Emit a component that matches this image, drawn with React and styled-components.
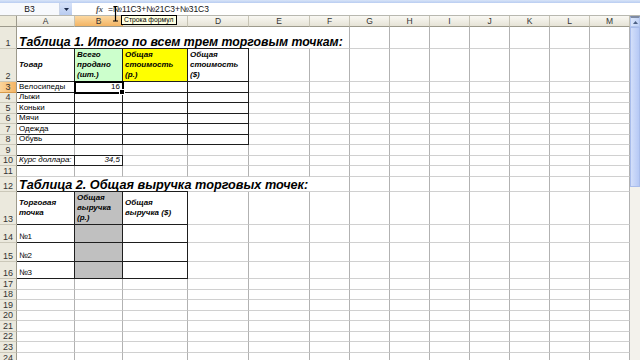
import React from 'react';
import styled, { createGlobalStyle, css } from 'styled-components';

const GlobalStyle = createGlobalStyle`
  html, body {
    margin: 0;
    padding: 0;
    background: #fff;
  }
  body {
    font-family: "Liberation Sans", Arial, sans-serif;
    overflow: hidden;
  }
`;

const COLS = 'ABCDEFGHIJKLM'.split('');
const COL_W = [58, 48, 65, 61, 61, 40, 40, 40, 40, 40, 40, 40, 40];
const ROW_H = [22, 33, 11, 10, 11, 10, 11, 10, 11, 10, 11, 15, 33, 18, 19, 17, 11, 10, 11, 10, 11, 10, 11, 11];

// dark-bordered blocks: [firstCol, lastCol, firstRow, lastRow]
const BOXES = [
  [0, 3, 2, 8],
  [0, 1, 10, 10],
  [0, 2, 13, 16],
];

const CELLS = {
  A1: { text: 'Таблица 1. Итого по всем трем торговым точкам:', span: 6, title: 12.3 },
  A2: { text: 'Товар', bold: true, italic: true, valign: 'center' },
  B2: { text: 'Всего продано (шт.)', bold: true, italic: true, wrap: true, valign: 'center', bg: '#ccffcc' },
  C2: { text: 'Общая стоимость (р.)', bold: true, italic: true, wrap: true, valign: 'center', bg: '#ffff00' },
  D2: { text: 'Общая стоимость ($)', bold: true, italic: true, wrap: true, valign: 'center' },
  A3: { text: 'Велосипеды' },
  B3: { text: '16', align: 'right', selected: true },
  A4: { text: 'Лыжи' },
  A5: { text: 'Коньки' },
  A6: { text: 'Мячи' },
  A7: { text: 'Одежда' },
  A8: { text: 'Обувь' },
  A10: { text: 'Курс доллара:', italic: true },
  B10: { text: '34,5', italic: true, align: 'right' },
  A12: { text: 'Таблица 2. Общая выручка торговых точек:', span: 6, title: 12.7 },
  A13: { text: 'Торговая точка', bold: true, italic: true, wrap: true, valign: 'center' },
  B13: { text: 'Общая выручка (р.)', bold: true, italic: true, wrap: true, valign: 'center', bg: '#c0c0c0' },
  C13: { text: 'Общая выручка ($)', bold: true, italic: true, wrap: true, valign: 'center' },
  A14: { text: '№1' },
  A15: { text: '№2' },
  A16: { text: '№3' },
  B14: { bg: '#c0c0c0' },
  B15: { bg: '#c0c0c0' },
  B16: { bg: '#c0c0c0' },
};

const inBox = (c, r) => BOXES.some(([c1, c2, r1, r2]) => c >= c1 && c <= c2 && r >= r1 && r <= r2);
const boxTop = (c, r) => BOXES.some(([c1, c2, r1]) => c >= c1 && c <= c2 && r === r1);

const App = () => {
  const rows = [];
  ROW_H.forEach((h, i) => {
    const r = i + 1;
    rows.push(
      <RowHead key={`h${r}`} $active={r === 3}>
        {r}
      </RowHead>
    );
    let c = 0;
    while (c < COLS.length) {
      const id = `${COLS[c]}${r}`;
      const cell = CELLS[id] || {};
      const span = cell.span || 1;
      rows.push(
        <Cell
          key={id}
          $span={span}
          $box={inBox(c, r)}
          $top={boxTop(c, r)}
          $bg={cell.bg}
          $bold={cell.bold}
          $italic={cell.italic}
          $wrap={cell.wrap}
          $align={cell.align}
          $valign={cell.valign}
          $title={cell.title}
          $selected={cell.selected}
        >
          {cell.text}
        </Cell>
      );
      c += span;
    }
  });

  return (
    <>
      <GlobalStyle />
      <Window>
        <ToolStrip />
        <FormulaBar>
          <NameBox>B3</NameBox>
          <DropButton>
            <svg width="5" height="3" viewBox="0 0 5 3">
              <path d="M0 0h5L2.5 3z" fill="#1b2a4a" />
            </svg>
          </DropButton>
          <FxLabel>fx</FxLabel>
          <FormulaText>=№11С3+№21С3+№31С3</FormulaText>
        </FormulaBar>
        <Body>
          <SheetGrid>
            <Corner />
            {COLS.map((col) => (
              <ColHead key={col} $active={col === 'B'}>
                {col}
              </ColHead>
            ))}
            {rows}
          </SheetGrid>
          <Scrollbar>
            <ScrollButton>
              <svg width="5" height="3" viewBox="0 0 5 3">
                <path d="M0 3L2.5 0L5 3z" fill="#4d6185" />
              </svg>
            </ScrollButton>
            <ScrollThumb />
            <ScrollTrack />
          </Scrollbar>
        </Body>
        <Cursor width="7" height="16" viewBox="0 0 7 16">
          <path d="M3.5 0v15M1 15h5M1.5 0.5h4" stroke="#000" strokeWidth="1.2" fill="none" />
        </Cursor>
        <Tooltip>Строка формул</Tooltip>
      </Window>
    </>
  );
};

const Window = styled.div`
  position: relative;
  width: 640px;
  height: 360px;
  display: flex;
  flex-direction: column;
  overflow: hidden;
  background: #fff;
`;

const ToolStrip = styled.div`
  height: 3px;
  flex: none;
  background: linear-gradient(#d8e4f8, #b9cdf1);
`;

const FormulaBar = styled.div`
  height: 13px;
  flex: none;
  display: flex;
  align-items: center;
  box-sizing: border-box;
  background: #fff;
  border-bottom: 1px solid #b8b8b0;
  font-size: 8.5px;
  line-height: 9px;
  color: #111;
`;

const NameBox = styled.div`
  width: 60px;
  height: 12px;
  box-sizing: border-box;
  display: flex;
  align-items: center;
  justify-content: center;
  background: #f7f9fd;
  border-right: 1px solid #c9d4e8;
`;

const DropButton = styled.div`
  width: 12px;
  height: 12px;
  display: flex;
  align-items: center;
  justify-content: center;
  background: linear-gradient(#d6e2f9, #b8cbf0);
`;

const FxLabel = styled.span`
  margin-left: 24px;
  width: 12px;
  font-family: "Liberation Serif", serif;
  font-style: italic;
  font-weight: 700;
  font-size: 8.5px;
  color: #555;
`;

const FormulaText = styled.span`
  letter-spacing: -0.1px;
`;

const Body = styled.div`
  flex: 1;
  min-height: 0;
  display: flex;
  overflow: hidden;
`;

const SheetGrid = styled.div`
  width: 630px;
  flex: none;
  display: grid;
  grid-template-columns: 17px ${COL_W.map((w) => `${w}px`).join(' ')};
  grid-template-rows: 11px ${ROW_H.map((h) => `${h}px`).join(' ')};
  align-content: start;
`;

const headBase = css`
  box-sizing: border-box;
  display: flex;
  justify-content: center;
  font-size: 8.5px;
  color: #333;
`;

const Corner = styled.div`
  ${headBase};
  background: #ece9d8;
  border-right: 1px solid #9d9a8c;
  border-bottom: 1px solid #9d9a8c;
`;

const ColHead = styled.div`
  ${headBase};
  align-items: center;
  background: ${(p) =>
    p.$active ? 'linear-gradient(#fcd9a2, #f3b463)' : 'linear-gradient(#f9f8f3, #e6e3d6)'};
  border-right: 1px solid ${(p) => (p.$active ? '#d79a4b' : '#c7c4b5')};
  border-bottom: 1px solid #9d9a8c;
`;

const RowHead = styled.div`
  ${headBase};
  align-items: flex-end;
  line-height: 10px;
  font-size: 9px;
  background: ${(p) => (p.$active ? 'linear-gradient(90deg, #fbd49a, #f3b463)' : '#ebe9dd')};
  border-right: 1px solid #9d9a8c;
  border-bottom: 1px solid ${(p) => (p.$active ? '#d79a4b' : '#cbc8b9')};
`;

const Cell = styled.div`
  position: relative;
  box-sizing: border-box;
  min-width: 0;
  grid-column: span ${(p) => p.$span};
  display: flex;
  flex-direction: column;
  justify-content: ${(p) =>
    p.$valign === 'center' ? 'center' : p.$valign === 'top' ? 'flex-start' : 'flex-end'};
  text-align: ${(p) => p.$align || 'left'};
  padding: 0 2px;
  background: ${(p) => p.$bg || '#fff'};
  border-right: 1px solid ${(p) => (p.$box ? '#1e1e1e' : '#b2b2b2')};
  border-bottom: 1px solid ${(p) => (p.$box ? '#1e1e1e' : '#d0d0d0')};
  font-size: 8px;
  line-height: 10px;
  color: #000;
  font-weight: ${(p) => (p.$bold ? 700 : 400)};
  font-style: ${(p) => (p.$italic ? 'italic' : 'normal')};
  white-space: ${(p) => (p.$wrap ? 'normal' : 'nowrap')};
  overflow: visible;

  ${(p) =>
    p.$top &&
    css`
      border-top: 1px solid #1e1e1e;
      margin-top: -1px;
    `}

  ${(p) =>
    p.$title &&
    css`
      font-size: ${p.$title}px;
      line-height: 11px;
      font-weight: 700;
      font-style: italic;
      padding-bottom: 0;
    `}

  ${(p) =>
    p.$selected &&
    css`
      z-index: 2;
      outline: 2px solid #000;
      outline-offset: -1px;

      &::after {
        content: '';
        position: absolute;
        right: -3px;
        bottom: -3px;
        width: 4px;
        height: 4px;
        background: #000;
        border: 1px solid #fff;
      }
    `}
`;

const Scrollbar = styled.div`
  width: 10px;
  flex: none;
  display: flex;
  flex-direction: column;
  background: #f4f3ee;
`;

const ScrollButton = styled.div`
  height: 11px;
  box-sizing: border-box;
  display: flex;
  align-items: center;
  justify-content: center;
  background: linear-gradient(90deg, #dbe6fb, #c1d3f7);
  border: 1px solid #b3c6ee;
  border-top: 2px solid #7d8aa5;
`;

const ScrollThumb = styled.div`
  height: 160px;
  box-sizing: border-box;
  background: linear-gradient(90deg, #d3dffa, #b6c9f5);
  border: 1px solid #a9bdeb;
`;

const ScrollTrack = styled.div`
  flex: 1;
  background: #f3f2ec;
`;

const Cursor = styled.svg`
  position: absolute;
  left: 112px;
  top: 6px;
`;

const Tooltip = styled.div`
  position: absolute;
  left: 121px;
  top: 15px;
  height: 10px;
  box-sizing: border-box;
  padding: 0 2px;
  display: flex;
  align-items: center;
  background: #ffffe1;
  border: 1px solid #000;
  font-size: 6.8px;
  line-height: 8px;
  color: #000;
  white-space: nowrap;
`;

export default App;
